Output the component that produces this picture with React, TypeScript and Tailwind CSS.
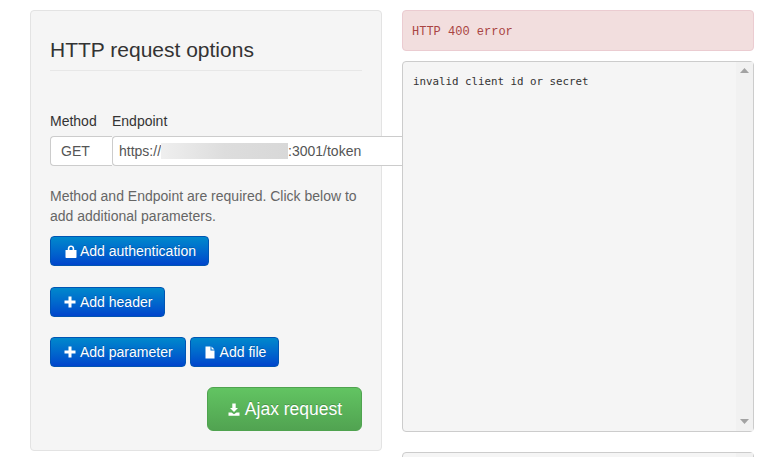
import React from 'react';

const btn =
  'flex h-[30px] items-center rounded-[4px] border border-[#0055b3] bg-gradient-to-b from-[#0088cc] to-[#0044cc] text-[14px] leading-[20px] text-white [text-shadow:0_-1px_0_rgba(0,0,0,0.2)]';

function Lock() {
  return (
    <svg width="12" height="13" viewBox="0 0 12 13" className="shrink-0">
      <path
        fill="#fff"
        d="M2.800 5V3.400C2.800 1.500 4.200 0.500 6 0.500s3.200 1 3.200 2.900V5h2.300v7.300c0 .4-.3.7-.7.7H1.200c-.4 0-.7-.3-.7-.7V5h2.300zm1.600 0h3.200V3.500C7.600 2.500 6.900 2 6 2s-1.600.5-1.600 1.500V5z"
      />
    </svg>
  );
}

function Plus() {
  return (
    <svg width="12" height="12" viewBox="0 0 12 12" className="shrink-0">
      <path fill="#fff" d="M4.500 0.500h3v4h4v3h-4v4h-3v-4h-4v-3h4z" />
    </svg>
  );
}

function FileIcon() {
  return (
    <svg width="10" height="13" viewBox="0 0 10 13" className="shrink-0">
      <path fill="#fff" d="M0.500 0.500H5.500V4.500H9.500V12.500H0.500zM6.500 0.500L9.500 3.500H6.500z" />
    </svg>
  );
}

function Download() {
  return (
    <svg width="12" height="13" viewBox="0 0 12 13" className="shrink-0">
      <path fill="#fff" d="M4.300 0.500h3.400v4.500h2.300L6 9 2 5h2.300zM0.500 9.500h3L6 11.300l2.500-1.800h3v3.200H0.500z" />
    </svg>
  );
}

export default function App() {
  return (
    <div className="flex h-[457px] w-[782px] items-start gap-5 overflow-hidden bg-white pl-[30px] pt-[10px] font-['Liberation_Sans',Arial,sans-serif] text-[14px] text-[#333333]">
      <div className="h-[441px] w-[352px] shrink-0 rounded-[4px] border border-[#e3e3e3] bg-[#f5f5f5] px-[19px] pt-[19px]">
        <h2 className="h-[41px] border-b border-[#e7e7e7] text-[21px] leading-[40px] font-normal text-[#333333]">
          HTTP request options
        </h2>

        <div className="mt-[40px] flex h-[20px] leading-[20px]">
          <span className="w-[62px]">Method</span>
          <span>Endpoint</span>
        </div>

        <div className="relative z-10 mt-[5px] flex h-[30px] w-[352px]">
          <div className="flex w-[62px] items-center rounded-l-[4px] border border-r-0 border-[#cccccc] bg-white pl-[10px] text-[#555555]">
            GET
          </div>
          <div className="flex flex-1 items-center rounded-l-[4px] border border-r-0 border-[#cccccc] bg-white pl-[6px] text-[#555555]">
            https://
            <span className="h-[16px] w-[127px] bg-gradient-to-r from-[#efefef] via-[#dddddd] to-[#d8d8d8]" />
            :3001/token
          </div>
        </div>

        <p className="mt-[20px] leading-[20px] text-[#666666]">
          Method and Endpoint are required. Click below to add additional parameters.
        </p>

        <div className="mt-[10px] flex">
          <button className={`${btn} pl-[14px] pr-[12px]`}>
            <Lock />
            <span className="ml-[3px]">Add authentication</span>
          </button>
        </div>

        <div className="mt-[21px] flex">
          <button className={`${btn} pl-[13px] pr-[12px]`}>
            <Plus />
            <span className="ml-[4px]">Add header</span>
          </button>
        </div>

        <div className="mt-[20px] flex gap-1">
          <button className={`${btn} pl-[13px] pr-[12px]`}>
            <Plus />
            <span className="ml-[4px]">Add parameter</span>
          </button>
          <button className={`${btn} pl-[14px] pr-[12px]`}>
            <FileIcon />
            <span className="ml-[5px]">Add file</span>
          </button>
        </div>

        <div className="mt-[20px] flex justify-end">
          <button className="flex h-[44px] w-[155px] items-center justify-center rounded-[6px] border border-[#4fa34f] bg-gradient-to-b from-[#62c462] to-[#51a351] pl-[1px] text-[17.5px] leading-[24px] text-white [text-shadow:0_-1px_0_rgba(0,0,0,0.2)]">
            <Download />
            <span className="ml-[5px]">Ajax request</span>
          </button>
        </div>
      </div>

      <div className="flex w-[352px] shrink-0 flex-col font-['Liberation_Mono','Courier_New',monospace] text-[12px]">
        <div className="flex h-[41px] items-center rounded-[4px] border border-[#ebccd1] bg-[#f2dede] pl-[9px] pt-[2px] text-[#a94442]">
          HTTP 400 error
        </div>

        <div className="mt-[10px] flex h-[371px] rounded-[4px] border border-[#cccccc] bg-[#f5f5f5]">
          <pre className="flex-1 pl-[10px] pt-[10px] font-['DejaVu_Sans_Mono','Liberation_Mono',monospace] text-[10.8px] leading-[20px] text-[#333333]">
            invalid client id or secret
          </pre>
          <div className="flex w-[17px] flex-col items-center justify-between bg-[#f1f1f1] pb-[7px] pt-[6px]">
            <svg width="9" height="5" viewBox="0 0 9 5">
              <path fill="#a3a3a3" d="M4.500 0L9 5H0z" />
            </svg>
            <svg width="9" height="5" viewBox="0 0 9 5">
              <path fill="#a3a3a3" d="M0 0h9L4.500 5z" />
            </svg>
          </div>
        </div>

        <div className="mt-[20px] flex h-[40px] rounded-[4px] border border-[#cccccc] bg-[#f5f5f5]">
          <div className="flex-1" />
          <div className="w-[17px] bg-[#f1f1f1]" />
        </div>
      </div>
    </div>
  );
}
